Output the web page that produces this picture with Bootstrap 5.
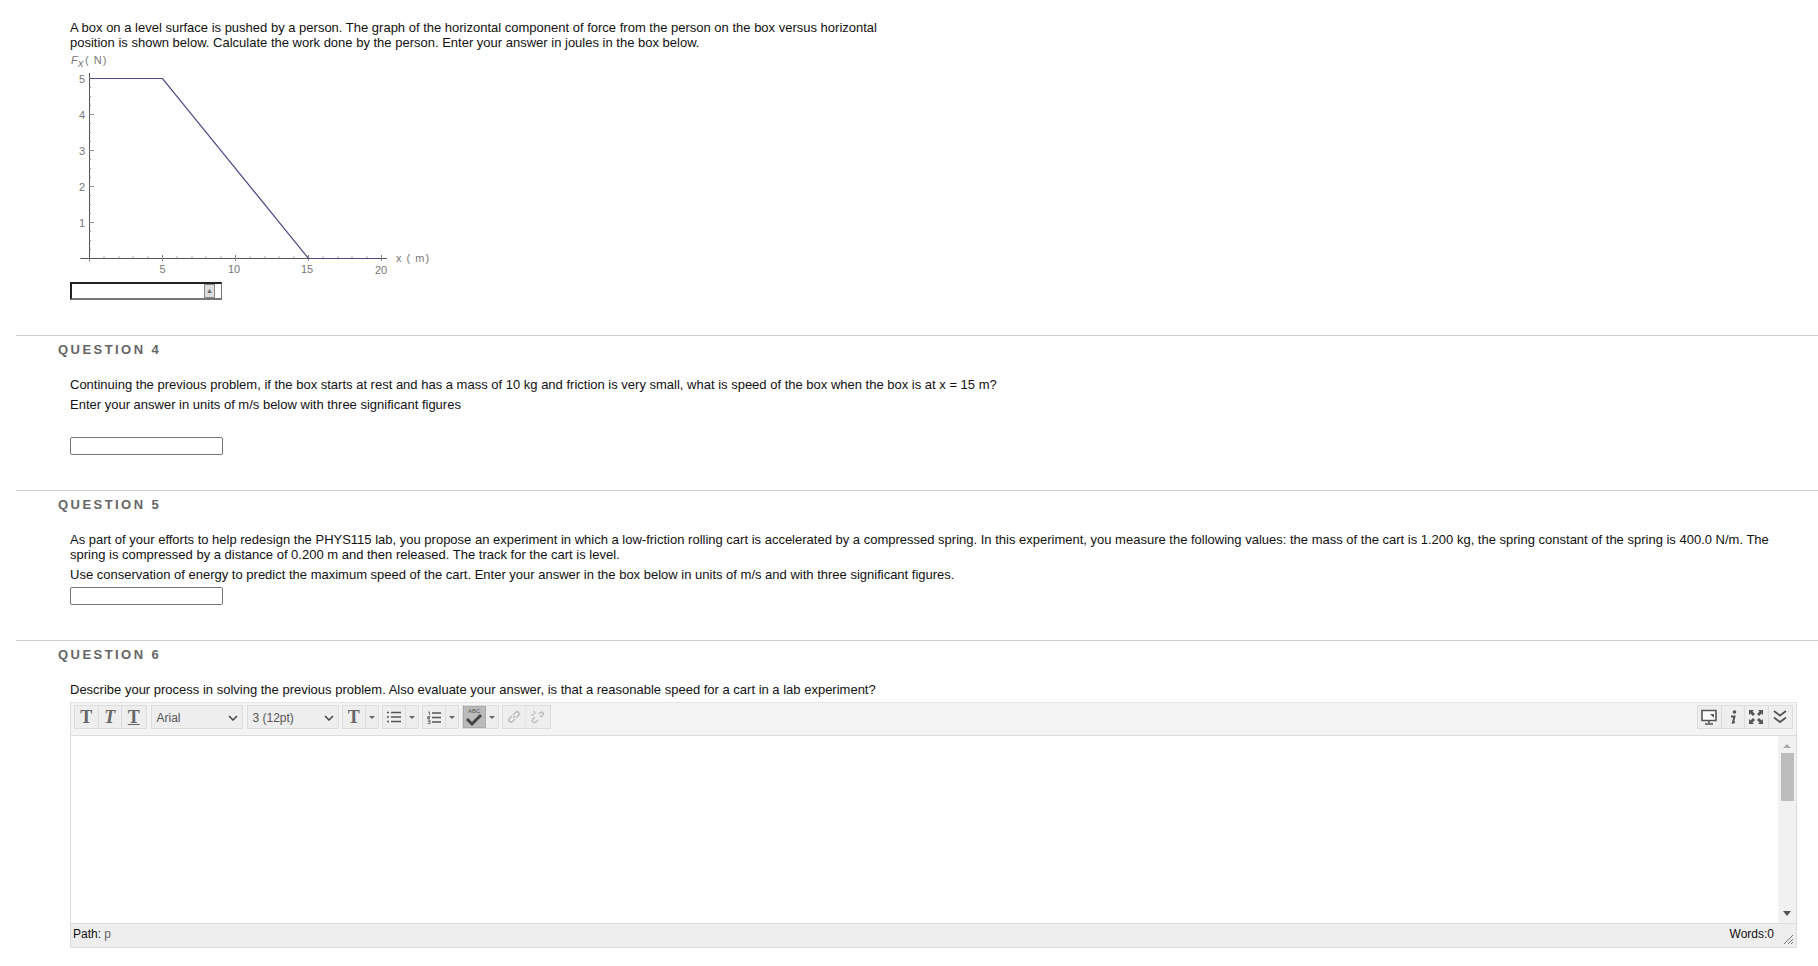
<!DOCTYPE html>
<html lang="en"><head><meta charset="utf-8"><title>Questions</title>
<link href="https://cdn.jsdelivr.net/npm/bootstrap@5.3.0/dist/css/bootstrap.min.css" rel="stylesheet">
<style>
html,body{height:966px;overflow:hidden;background:#fff}
body{font:13px/15px "Liberation Sans",Arial,sans-serif;color:#111;padding:0 0 0 16px}
.qhead{font:bold 13px/16px "Liberation Sans",Arial,sans-serif;letter-spacing:2.45px;color:#666;margin:0 0 0 42px;height:16px}
.qbody{margin-left:54px}
.qbody p{margin:0}
.firstq{padding-top:20px;height:335px}
.intro{width:830px}
.plot{display:block;margin:4px 0 0 0}
.plot text{font:11px "Liberation Sans",Arial,sans-serif;fill:#777}
.plot text.ital{font-style:italic}
.ansbox{display:block;width:153px;height:18px;border:1px solid #767676;border-radius:2px;background:#fff}
.ansfocus{display:flex;justify-content:flex-end;align-items:center;width:152px;height:18px;margin-top:2px;border-style:solid;border-width:2px 1px 2px 2px;border-color:#222 #777 #777 #222;padding-right:6px}
.spin{width:11px;height:14px;background:#ddd;border:1px solid #888;font-size:7px;line-height:11px;text-align:center;color:#666}
.q4{border-top:1px solid #ccc;height:155px;padding-top:6px}
.q4 .l1{margin-top:17px;line-height:20px}
.q4 .ansbox{margin-top:22px}
.q5{border-top:1px solid #ccc;height:150px;padding-top:6px}
.q5 .l1{margin-top:19px;width:1722px;line-height:15px}
.q5 .l2{margin-top:5px}
.q5 .ansbox{margin-top:5px}
.q6{border-top:1px solid #ccc;padding-top:6px}
.q6 .l1{margin-top:19px;margin-bottom:5px}
.rte{width:1727px;border:1px solid #ddd;border-top-color:#e4e4e4;height:246px;display:flex;flex-direction:column}
.rtebar{height:33px;background:#f4f4f4;border-bottom:1px solid #ddd;padding:2px 3px 0 3px;display:flex;gap:3px;align-items:flex-start;flex:none;font-size:12px}
.tbgroup{display:flex;height:24px;border:1px solid #ddd;background:#eee}
.tbbtn{width:23.5px;height:22px;border-right:1px solid #ddd;display:flex;align-items:center;justify-content:center;color:#666}
.tbbtn:last-child{border-right:0}
.tbcaret{width:11.5px}
.tbcaret:after{content:"";border:3px solid transparent;border-top:3px solid #666;border-bottom:0}
.tbT{font:bold 18px/22px "Liberation Serif",serif;color:#666}
.tbI{font-style:italic}
.tbU{text-decoration:underline;text-underline-offset:1px}
.tbsel{width:92px;height:24px;margin-left:1px;border:1px solid #ddd;background:#eee;color:#555;font-size:12px;line-height:22px;padding:1px 4px 0 4px;display:flex;justify-content:space-between;align-items:center}
.tbsel span{margin-left:1px}
.tbon{background:#bbb;outline:1px solid #aaa;outline-offset:-1px}
.tbdim{opacity:.45}
.rtemid{flex:1;display:flex;min-height:0}
.rtetext{flex:1;background:#fff}
.rtescroll{width:18px;background:#f1f1f1;display:flex;flex-direction:column;align-items:center;justify-content:space-between;padding:8px 0 7px}
.sthumb{width:13px;height:48px;background:#bdbdbd;margin:-1px 0 auto}
.upar{border:4px solid transparent;border-bottom:4px solid #aaa;border-top:0;margin-bottom:6px}
.dnar{border:4px solid transparent;border-top:5px solid #555;border-bottom:0}
.rtefoot{flex:none;height:24px;border-top:1px solid #ddd;background:#eee;display:flex;justify-content:space-between;align-items:center;padding:0 22px 3px 2px;position:relative;line-height:16px;font-size:12px}
.rtefoot .pathv{color:#666}
.grip{position:absolute;right:2px;bottom:2px}
</style></head><body>
<div class="firstq"><div class="qbody">
<p class="intro">A box on a level surface is pushed by a person. The graph of the horizontal component of force from the person on the box versus horizontal position is shown below. Calculate the work done by the person. Enter your answer in joules in the box below.</p>
<svg class="plot" width="400" height="226" viewBox="0 0 400 226" role="img" aria-label="Force versus position graph">
<g stroke="#555" stroke-width="1" fill="none">
<path d="M10.500 204.500H317M19.500 19V204.500"/>
<path stroke="#888" d="M19 24.500h5M19 60.500h5M19 96.500h5M19 132.500h5M19 168.500h5M19 33.500h2M19 42.500h2M19 51.500h2M19 69.500h2M19 78.500h2M19 87.500h2M19 105.500h2M19 114.500h2M19 123.500h2M19 141.500h2M19 150.500h2M19 159.500h2M19 177.500h2M19 186.500h2M19 195.500h2M19.500 204.500v3M34 204.500v-2M49 204.500v-2M63 204.500v-2M78 204.500v-2M92.500 201v6M107 204.500v-2M122 204.500v-2M136 204.500v-2M151 204.500v-2M165.500 201v6M180 204.500v-2M195 204.500v-2M209 204.500v-2M224 204.500v-2M238.500 201v6M253 204.500v-2M268 204.500v-2M282 204.500v-2M297 204.500v-2M311.500 201v6"/>
</g>
<path d="M19.500 24.500H92.500L238.500 204.500H311.500" fill="none" stroke="#4d4a86" stroke-width="1.200"/>
<text class="ital" x="1" y="10">F</text><text class="ital" x="8" y="13">x</text><text x="15" y="10" letter-spacing="1">( N)</text>
<text x="9" y="29">5</text><text x="9" y="65">4</text><text x="9" y="101">3</text><text x="9" y="137">2</text><text x="9" y="173">1</text>
<text x="89.500" y="219">5</text><text x="158" y="219">10</text><text x="231" y="219">15</text><text x="305" y="220">20</text>
<text x="326" y="208" letter-spacing="1">x ( m)</text>
</svg>
<div class="ansfocus"><span class="spin">&#9650;</span></div>
</div></div>

<div class="q4">
<div class="qhead">QUESTION 4</div>
<div class="qbody">
<p class="l1">Continuing the previous problem, if the box starts at rest and has a mass of 10 kg and friction is very small, what is speed of the box when the box is at x = 15 m?<br>Enter your answer in units of m/s below with three significant figures</p>
<span class="ansbox"></span>
</div></div>

<div class="q5">
<div class="qhead">QUESTION 5</div>
<div class="qbody">
<p class="l1">As part of your efforts to help redesign the PHYS115 lab, you propose an experiment in which a low-friction rolling cart is accelerated by a compressed spring. In this experiment, you measure the following values: the mass of the cart is 1.200 kg, the spring constant of the spring is 400.0 N/m. The spring is compressed by a distance of 0.200 m and then released. The track for the cart is level.</p>
<p class="l2">Use conservation of energy to predict the maximum speed of the cart. Enter your answer in the box below in units of m/s and with three significant figures.</p>
<span class="ansbox"></span>
</div></div>

<div class="q6">
<div class="qhead">QUESTION 6</div>
<div class="qbody">
<p class="l1">Describe your process in solving the previous problem. Also evaluate your answer, is that a reasonable speed for a cart in a lab experiment?</p>
<div class="rte">
<div class="rtebar">
<div class="tbgroup"><div class="tbbtn tbT">T</div><div class="tbbtn tbT tbI">T</div><div class="tbbtn tbT tbU">T</div></div>
<div class="tbsel"><span>Arial</span><svg width="10" height="6" viewBox="0 0 10 6"><path d="M1 1l4 4 4-4" fill="none" stroke="#444" stroke-width="1.500"/></svg></div>
<div class="tbsel"><span>3 (12pt)</span><svg width="10" height="6" viewBox="0 0 10 6"><path d="M1 1l4 4 4-4" fill="none" stroke="#444" stroke-width="1.500"/></svg></div>
<div class="tbgroup"><div class="tbbtn tbT">T</div><div class="tbbtn tbcaret"></div></div>
<div class="tbgroup"><div class="tbbtn"><svg width="14" height="12" viewBox="0 0 14 12"><path d="M0 1.500h2M4 1.500h10M0 6h2M4 6h10M0 10.500h2M4 10.500h10" stroke="#555" stroke-width="1.500"/></svg></div><div class="tbbtn tbcaret"></div></div>
<div class="tbgroup"><div class="tbbtn"><svg width="14" height="13" viewBox="0 0 14 13"><path d="M5 2h9M5 6.500h9M5 11h9" stroke="#555" stroke-width="1.500"/><path d="M1 1h1.500v3M0.500 5.500h2.500v.8H.5v1.200h2.500M.5 9h2.500v3.500H.5M1 10.700h2" stroke="#555" stroke-width=".8" fill="none"/></svg></div><div class="tbbtn tbcaret"></div></div>
<div class="tbgroup"><div class="tbbtn tbon"><svg width="18" height="20" viewBox="0 0 18 20"><text x="3" y="6" font-size="6" font-family="Liberation Sans" fill="#555">ABC</text><path d="M2 12l5 5L16 8" fill="none" stroke="#444" stroke-width="3"/></svg></div><div class="tbbtn tbcaret"></div></div>
<div class="tbgroup"><div class="tbbtn tbdim"><svg width="14" height="14" viewBox="0 0 14 14"><path d="M6 8l2-2M5 6L2.500 8.500a2 2 0 0 0 3 3L8 9M6 5l2.500-2.500a2 2 0 0 1 3 3L9 8" fill="none" stroke="#888" stroke-width="1.700"/></svg></div><div class="tbbtn tbdim"><svg width="16" height="14" viewBox="0 0 16 14"><path d="M5 7L3 9a2 2 0 0 0 3 3l2-2M10 7l2.500-1.500a1.800 1.800 0 0 0-2-3L9 4M4 1l1 3M1 5h3" fill="none" stroke="#888" stroke-width="1.500"/></svg></div></div>
<div class="tbgroup ms-auto"><div class="tbbtn"><svg width="16" height="16" viewBox="0 0 16 16"><path d="M1 1.500h14v10H1z" fill="#fff" stroke="#555" stroke-width="1.600"/><path d="M9 5l4 4V5z" fill="#555"/><path d="M8 12v2M4 15h8" stroke="#555" stroke-width="1.600"/></svg></div><div class="tbbtn"><svg width="8" height="15" viewBox="0 0 8 15"><circle cx="5.500" cy="2" r="1.800" fill="#555"/><path d="M2 6.500h3.500L4 12.500l1.800-.5" fill="none" stroke="#555" stroke-width="2"/></svg></div><div class="tbbtn"><svg width="14" height="14" viewBox="0 0 14 14"><path d="M0 0h5L3.500 1.500 6 4 4 6 1.500 3.500 0 5zM14 0H9l1.500 1.500L8 4l2 2 2.500-2.500L14 5zM0 14h5l-1.500-1.500L6 10 4 8l-2.500 2.500L0 9zM14 14H9l1.500-1.500L8 10l2-2 2.500 2.500L14 9z" fill="#555"/></svg></div><div class="tbbtn"><svg width="14" height="14" viewBox="0 0 14 14"><path d="M1 1l6 4.500L13 1M1 7.500L7 12l6-4.500" fill="none" stroke="#555" stroke-width="1.800"/></svg></div></div>
</div>
<div class="rtemid"><div class="rtetext"></div><div class="rtescroll"><span class="upar"></span><span class="sthumb"></span><span class="dnar"></span></div></div>
<div class="rtefoot"><span>Path: <span class="pathv">p</span></span><span>Words:0</span>
<svg class="grip" width="11" height="11" viewBox="0 0 11 11"><path d="M1 10L10 1M5 10l5-5M8 10l2-2" stroke="#777" stroke-width="1"/></svg></div>
</div>
</div></div>
<script src="https://cdn.jsdelivr.net/npm/bootstrap@5.3.0/dist/js/bootstrap.bundle.min.js"></script>
</body></html>
